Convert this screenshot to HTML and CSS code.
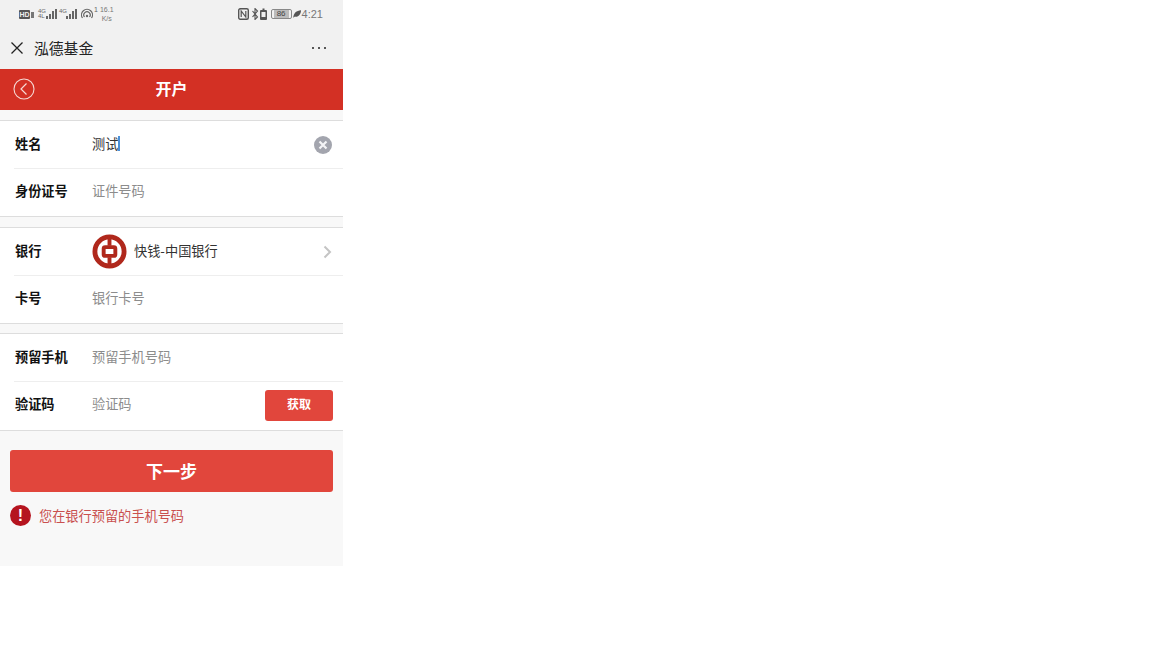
FILE: index.html
```html
<!DOCTYPE html>
<html lang="zh-CN">
<head>
    <meta charset="UTF-8">
    <meta name="viewport" content="width=device-width, initial-scale=1.0">
    <title>开户</title>
    <link rel="stylesheet" href="styles.css">
</head>
<body>
    <div class="phone">
        <div class="status">
            <div class="status-left">
                <span class="hd">HD</span>
                <span class="tiny-box"></span>
                <span class="net">4G<br>4L</span>
                <svg class="bars" width="11" height="10" viewBox="0 0 11 10"><path d="M0 7h2v3H0zM3 5h2v5H3zM6 2h2v8H6zM9 0h2v10H9z" fill="#666"/></svg>
                <span class="net net-one">4G</span>
                <svg class="bars" width="11" height="10" viewBox="0 0 11 10"><path d="M0 7h2v3H0zM3 5h2v5H3zM6 2h2v8H6zM9 0h2v10H9z" fill="#666"/></svg>
                <svg class="wifi" width="12" height="12" viewBox="0 0 12 12"><path d="M1.500 10a5.500 5.500 0 1 1 9 0M3.500 9a3.200 3.200 0 1 1 5 0" fill="none" stroke="#666" stroke-width="1.200"/><circle cx="6" cy="8" r="1.200" fill="#666"/></svg>
                <span class="wifi-up">1</span>
                <span class="speed">16.1<br>K/s</span>
            </div>
            <div class="status-right">
                <svg width="11" height="12" viewBox="0 0 11 12"><rect x="0.700" y="0.700" width="9.600" height="10.600" rx="1.500" fill="none" stroke="#555" stroke-width="1.400"/><path d="M3.200 9V3l4.600 6V3" fill="none" stroke="#555" stroke-width="1.200"/></svg>
                <svg width="16" height="12" viewBox="0 0 16 12"><path d="M0.500 3l5 6-2.500 2.500V.5L5.500 3l-5 6" fill="none" stroke="#555" stroke-width="1.100"/><rect x="8" y="2" width="7" height="10" rx="1" fill="#555"/><rect x="10.500" y="0.500" width="2" height="2" fill="#555"/><rect x="9.500" y="4" width="4" height="5" fill="#eee"/></svg>
                <span class="battery"><span class="battery-num">86</span></span>
                <svg class="leaf" width="8" height="8" viewBox="0 0 8 8"><path d="M0.200 7.800C.5 3 3.500.5 8 .2 8 5 4.500 7.500 2 6.500z" fill="#555"/></svg>
                <span class="clock">4:21</span>
            </div>
        </div>

        <div class="titlebar">
            <svg class="close" width="14" height="14" viewBox="0 0 14 14"><path d="M1.500 1.500l11 11M12.500 1.500l-11 11" stroke="#222" stroke-width="1.300" fill="none"/></svg>
            <span class="title-text">泓德基金</span>
            <span class="dots"><i></i><i></i><i></i></span>
        </div>

        <div class="header">
            <svg class="back" width="22" height="22" viewBox="0 0 22 22"><circle cx="11" cy="11" r="10" fill="none" stroke="#f6d9d5" stroke-width="1.100"/><path d="M13.500 5.500L8 11l5.500 5.500" fill="none" stroke="#f6d9d5" stroke-width="1.200"/></svg>
            <span class="header-text">开户</span>
        </div>

        <div class="group">
            <div class="row">
                <label class="row-label">姓名</label>
                <span class="row-value">测试<span class="caret"></span></span>
                <svg class="clear" width="18" height="18" viewBox="0 0 18 18"><circle cx="9" cy="9" r="9" fill="#a3a5ae"/><path d="M5.500 5.500l7 7M12.500 5.500l-7 7" stroke="#f4f4f6" stroke-width="2.200"/></svg>
            </div>
            <div class="row">
                <label class="row-label">身份证号</label>
                <span class="row-hint">证件号码</span>
            </div>
        </div>

        <div class="group">
            <div class="row">
                <label class="row-label">银行</label>
                <svg class="boc" width="35" height="35" viewBox="0 0 36 36">
                    <circle cx="18" cy="18" r="15" fill="none" stroke="#b0281c" stroke-width="5"/>
                    <rect x="12" y="13.500" width="12" height="9" rx="1.500" fill="none" stroke="#b0281c" stroke-width="4"/>
                    <path d="M18 2v10M18 24v10" stroke="#b0281c" stroke-width="4"/>
                </svg>
                <span class="row-value">快钱-中国银行</span>
                <svg class="chevron" width="9" height="14" viewBox="0 0 9 14"><path d="M1.500 1.500L7 7l-5.500 5.500" fill="none" stroke="#c4c4c4" stroke-width="2"/></svg>
            </div>
            <div class="row">
                <label class="row-label">卡号</label>
                <span class="row-hint">银行卡号</span>
            </div>
        </div>

        <div class="group group-last">
            <div class="row">
                <label class="row-label">预留手机</label>
                <span class="row-hint">预留手机号码</span>
            </div>
            <div class="row">
                <label class="row-label">验证码</label>
                <span class="row-hint">验证码</span>
                <button class="code-btn">获取</button>
            </div>
        </div>

        <button class="next-btn">下一步</button>

        <div class="error">
            <span class="error-icon">!</span>
            <span class="error-text">您在银行预留的手机号码</span>
        </div>
    </div>
</body>
</html>
```

FILE: styles.css
```css
body {
    margin: 0;
    background-color: #fff;
    font-family: "Noto Sans CJK SC", "Liberation Sans", sans-serif;
}
.phone {
    width: 343px;
    height: 566px;
    background-color: #f8f8f8;
    overflow: hidden;
}
.status {
    height: 28px;
    padding: 0 20px 0 19px;
    display: flex;
    align-items: center;
    justify-content: space-between;
    background-color: #f1f1f1;
    color: #666;
}
.status-left, .status-right {
    display: flex;
    align-items: center;
}
.status-left {
    gap: 1px;
}
.status-right {
    gap: 3px;
}
.hd {
    width: 11px;
    height: 9px;
    background-color: #555;
    color: #eee;
    font: bold 7px/9px "Liberation Sans", sans-serif;
    text-align: center;
    border-radius: 1px;
}
.tiny-box {
    width: 3px;
    height: 6px;
    margin-top: 2px;
    background-color: #777;
}
.net {
    width: 7px;
    margin-left: 3px;
    font: 6px/5px "Liberation Sans", sans-serif;
    white-space: nowrap;
}
.net-one {
    width: 6px;
    margin-top: -6px;
    margin-left: 1px;
}
.wifi {
    margin-left: 3px;
}
.wifi-up {
    font: 7px/7px "Liberation Sans", sans-serif;
    margin-top: -9px;
}
.speed {
    font: 7px/9px "Liberation Sans", sans-serif;
    text-align: center;
    margin-left: 1px;
    margin-top: -1px;
    color: #777;
}
.battery {
    width: 19px;
    height: 8px;
    border: 1px solid #888;
    border-radius: 2px;
    display: flex;
    align-items: center;
    justify-content: center;
}
.battery-num {
    font: 8px/8px "Liberation Sans", sans-serif;
    background-color: #bbb;
    color: #444;
    padding: 0 3px;
}
.leaf {
    margin-left: -2px;
}
.clock {
    font: 11px "Liberation Sans", sans-serif;
    color: #777;
    margin-left: -2px;
}
.titlebar {
    height: 41px;
    padding: 0 17px 2px 10px;
    box-sizing: border-box;
    display: flex;
    align-items: center;
    background-color: #f1f1f1;
    color: #222;
}
.title-text {
    margin-left: 10px;
    font-size: 14.800px;
    flex: 1;
}
.dots {
    display: flex;
    gap: 4px;
}
.dots i {
    width: 2px;
    height: 2px;
    border-radius: 50%;
    background-color: #222;
}
.header {
    height: 41px;
    position: relative;
    display: flex;
    align-items: center;
    justify-content: center;
    background-color: #d33024;
    color: #fff;
    font-size: 16px;
    font-weight: bold;
}
.header-text {
    padding-bottom: 3px;
}
.back {
    position: absolute;
    left: 13px;
    top: 9px;
}
.group {
    margin-top: 10px;
    background-color: #fff;
    border-top: 1px solid #ddd;
    border-bottom: 1px solid #ddd;
    padding-left: 14px;
}
.group-last {
    margin-top: 9px;
}
.row {
    height: 47px;
    display: flex;
    align-items: center;
    padding-right: 10px;
    font-size: 13.200px;
}
.row + .row {
    border-top: 1px solid #eee;
}
.group-last .row + .row {
    height: 48px;
}
.row-label {
    width: 77px;
    padding: 0 0 3px 1px;
    flex-shrink: 0;
    font-weight: bold;
    color: #111;
}
.row-value {
    padding-bottom: 3px;
    color: #333;
    flex: 1;
}
.row-hint {
    padding-bottom: 3px;
    color: #8c8c8c;
    flex: 1;
}
.row + .row .row-label, .row + .row .row-hint {
    padding-bottom: 5px;
}
.caret {
    display: inline-block;
    width: 2px;
    height: 15px;
    background-color: #4a90d9;
    vertical-align: -2px;
}
.clear {
    flex-shrink: 0;
    margin-right: 1px;
}
.boc {
    margin-right: 7px;
    flex-shrink: 0;
}
.chevron {
    margin-right: 1px;
}
.code-btn {
    width: 68px;
    height: 31px;
    margin-bottom: 2px;
    border: none;
    border-radius: 3px;
    background-color: #e1463c;
    color: #fff;
    font-family: inherit;
    font-size: 12px;
    font-weight: bold;
    padding: 0 0 3px;
}
.next-btn {
    display: block;
    width: 323px;
    height: 42px;
    margin: 19px 0 0 10px;
    border: none;
    border-radius: 3px;
    background-color: #e1463c;
    color: #fff;
    font-family: inherit;
    font-size: 17px;
    font-weight: bold;
    padding: 0 0 2px;
}
.error {
    display: flex;
    align-items: center;
    gap: 8px;
    margin: 13px 0 0 10px;
    color: #c9504f;
    font-size: 13.200px;
}
.error-text {
    padding-bottom: 1px;
}
.error-icon {
    width: 21px;
    height: 21px;
    border-radius: 50%;
    background-color: #b5141f;
    color: #fff;
    font: bold 16px/21px "Liberation Sans", sans-serif;
    text-align: center;
}
```
